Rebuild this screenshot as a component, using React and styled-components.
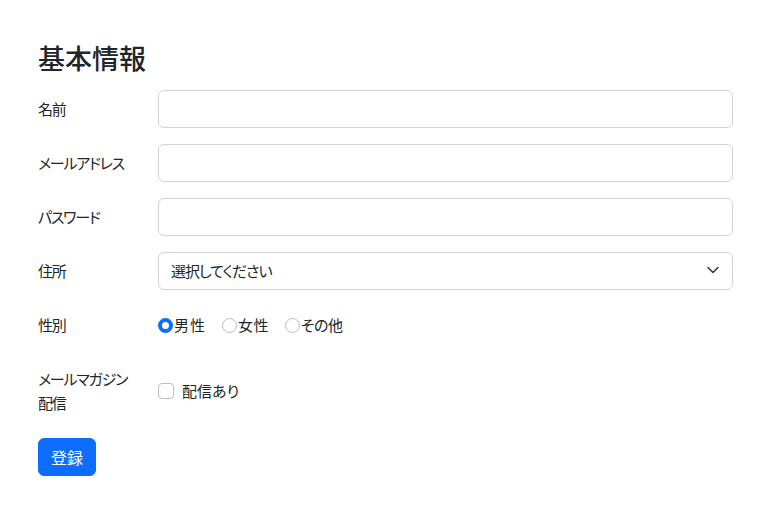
import React from 'react';
import styled, { createGlobalStyle } from 'styled-components';

const GlobalStyle = createGlobalStyle`
    body {
        margin: 0;
        background: #fff;
        color: #212529;
        font-family: "Noto Sans CJK JP", "Noto Sans", sans-serif;
        font-size: 16px;
        line-height: 1.5;
        font-feature-settings: "palt";
    }
    * { box-sizing: border-box; }
`;

const Page = styled.div`
    padding: 41px 48px 30px 38px;
`;

const Heading = styled.h3`
    margin: 0 0 15px;
    font-size: 27px;
    font-weight: 500;
    line-height: 34px;
`;

const Row = styled.div`
    display: grid;
    grid-template-columns: 96px 1fr;
    column-gap: 24px;
    align-items: center;
    margin-bottom: 16px;
`;

const Label = styled.label`
    padding: 7px 0;
    font-size: 15px;
    line-height: 24px;
    letter-spacing: -1.2px;
`;

const Input = styled.input`
    display: block;
    width: 100%;
    height: 38px;
    padding: 6px 12px;
    font: inherit;
    color: #212529;
    border: 1px solid #ced4da;
    border-radius: 6px;
    background: #fff;
    outline: none;
`;

const SelectWrap = styled.div`
    position: relative;
`;

const Select = styled.select`
    display: block;
    width: 100%;
    height: 38px;
    padding: 6px 36px 6px 12px;
    font: inherit;
    font-size: 15px;
    letter-spacing: -1px;
    color: #212529;
    border: 1px solid #ced4da;
    border-radius: 6px;
    background: #fff;
    appearance: none;
    outline: none;
`;

const Chevron = styled.svg`
    position: absolute;
    right: 14px;
    top: 14px;
    pointer-events: none;
`;

const Options = styled.div`
    display: flex;
    align-items: center;
    gap: 16px;
    font-size: 15px;
`;

const Choice = styled.label`
    display: flex;
    align-items: center;
    gap: ${(p) => p.$gap || 0}px;
    letter-spacing: ${(p) => p.$spacing || 0}px;
`;

const Radio = styled.span`
    width: 15px;
    height: 15px;
    border-radius: 50%;
    border: ${(p) => (p.$checked ? '4px solid #0d6efd' : '1px solid #b9bdc1')};
    background: #fff;
    margin-right: 1px;
`;

const Check = styled.span`
    width: 16px;
    height: 16px;
    border: 1px solid #b9bdc1;
    border-radius: 4px;
    background: #fff;
`;

const Button = styled.button`
    padding: 6px 12px;
    font: inherit;
    font-size: 16px;
    line-height: 24px;
    color: #fff;
    background: #0d6efd;
    border: 1px solid #0d6efd;
    border-radius: 6px;
`;

const genders = [
    { label: '男性', checked: true, spacing: 1 },
    { label: '女性', spacing: 0.5 },
    { label: 'その他', spacing: -0.5 }
];

const App = () => (
    <>
        <GlobalStyle />
        <Page>
            <Heading>基本情報</Heading>
            <Row>
                <Label>名前</Label>
                <Input type="text" />
            </Row>
            <Row>
                <Label>メールアドレス</Label>
                <Input type="email" />
            </Row>
            <Row>
                <Label>パスワード</Label>
                <Input type="password" />
            </Row>
            <Row>
                <Label>住所</Label>
                <SelectWrap>
                    <Select defaultValue="">
                        <option value="">選択してください</option>
                    </Select>
                    <Chevron width="12" height="8" viewBox="0 0 12 8">
                        <path d="M1 1.5 6 6.5 11 1.5" fill="none" stroke="#343a40" strokeWidth="1.6" strokeLinecap="round" strokeLinejoin="round" />
                    </Chevron>
                </SelectWrap>
            </Row>
            <Row>
                <Label>性別</Label>
                <Options>
                    {genders.map((g) => (
                        <Choice key={g.label} $spacing={g.spacing}>
                            <Radio $checked={g.checked} />
                            {g.label}
                        </Choice>
                    ))}
                </Options>
            </Row>
            <Row>
                <Label>メールマガジン配信</Label>
                <Options>
                    <Choice $gap={8}>
                        <Check />
                        配信あり
                    </Choice>
                </Options>
            </Row>
            <Button>登録</Button>
        </Page>
    </>
);

export default App;
